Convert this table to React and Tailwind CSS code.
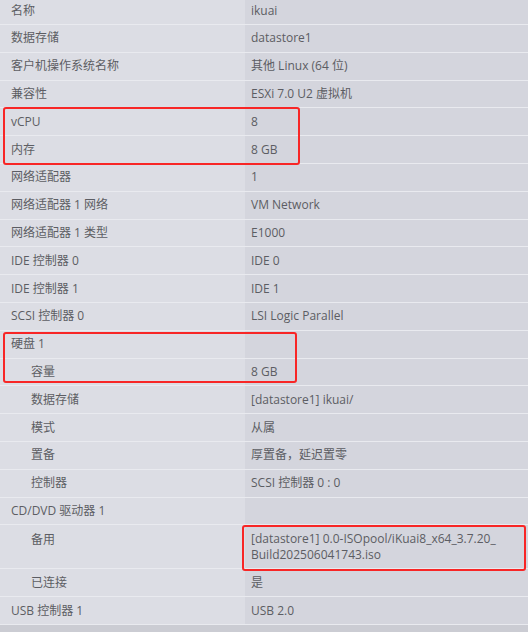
const rows = [
  { label: '名称', value: 'ikuai' },
  { label: '数据存储', value: 'datastore1' },
  { label: '客户机操作系统名称', value: '其他 Linux (64 位)' },
  { label: '兼容性', value: 'ESXi 7.0 U2 虚拟机' },
  { label: 'vCPU', value: '8' },
  { label: '内存', value: '8 GB' },
  { label: '网络适配器', value: '1' },
  { label: '网络适配器 1 网络', value: 'VM Network' },
  { label: '网络适配器 1 类型', value: 'E1000' },
  { label: 'IDE 控制器 0', value: 'IDE 0' },
  { label: 'IDE 控制器 1', value: 'IDE 1' },
  { label: 'SCSI 控制器 0', value: 'LSI Logic Parallel' },
  { label: '硬盘 1', value: '' },
  { label: '容量', value: '8 GB', sub: true },
  { label: '数据存储', value: '[datastore1] ikuai/', sub: true },
  { label: '模式', value: '从属', sub: true },
  { label: '置备', value: '厚置备，延迟置零', sub: true },
  { label: '控制器', value: 'SCSI 控制器 0 : 0', sub: true },
  { label: 'CD/DVD 驱动器 1', value: '' },
  {
    label: '备用',
    lines: ['[datastore1] 0.0-ISOpool/iKuai8_x64_3.7.20_', 'Build202506041743.iso'],
    sub: true,
  },
  { label: '已连接', value: '是', sub: true },
  { label: 'USB 控制器 1', value: 'USB 2.0' },
]

function Row({ row }) {
  const tall = !!row.lines
  return (
    <div className={'flex border-b border-[#e9eaef] ' + (tall ? 'h-[44px]' : 'h-[27.8px]')}>
      <div
        className={
          'flex w-[245px] shrink-0 bg-[#dcdde4] ' +
          (row.sub ? 'pl-[31px] ' : 'pl-[11px] ') +
          (tall ? 'items-start pt-[6px]' : 'items-center')
        }
      >
        {row.label}
      </div>
      <div className={'flex flex-1 bg-[#d4d5dd] pl-[6px] ' + (tall ? 'items-start pt-[6px]' : 'items-center')}>
        {tall ? (
          <div className="leading-[16px]">
            {row.lines.map((l) => (
              <div key={l}>{l}</div>
            ))}
          </div>
        ) : (
          row.value
        )}
      </div>
    </div>
  )
}

export default function App() {
  return (
    <div
      className="relative h-[632px] w-[528px] overflow-hidden bg-[#cbccd3] text-[12px] text-[#5c5d63]"
      style={{ fontFamily: '"Open Sans", "Noto Sans CJK SC", sans-serif' }}
    >
      <div className="-mt-[2.8px]">
        {rows.map((r, i) => (
          <Row key={i} row={r} />
        ))}
      </div>

      {/* annotation boxes drawn over the table */}
      <div className="absolute left-[3px] top-[107px] h-[58px] w-[297px] rounded-[3px] border-2 border-[#f82626]" />
      <div className="absolute left-[3px] top-[332px] h-[51px] w-[294px] rounded-[3px] border-2 border-[#f82626]" />
      <div className="absolute left-[242px] top-[525px] h-[46px] w-[284px] rounded-[3px] border-2 border-[#f82626]" />
    </div>
  )
}
